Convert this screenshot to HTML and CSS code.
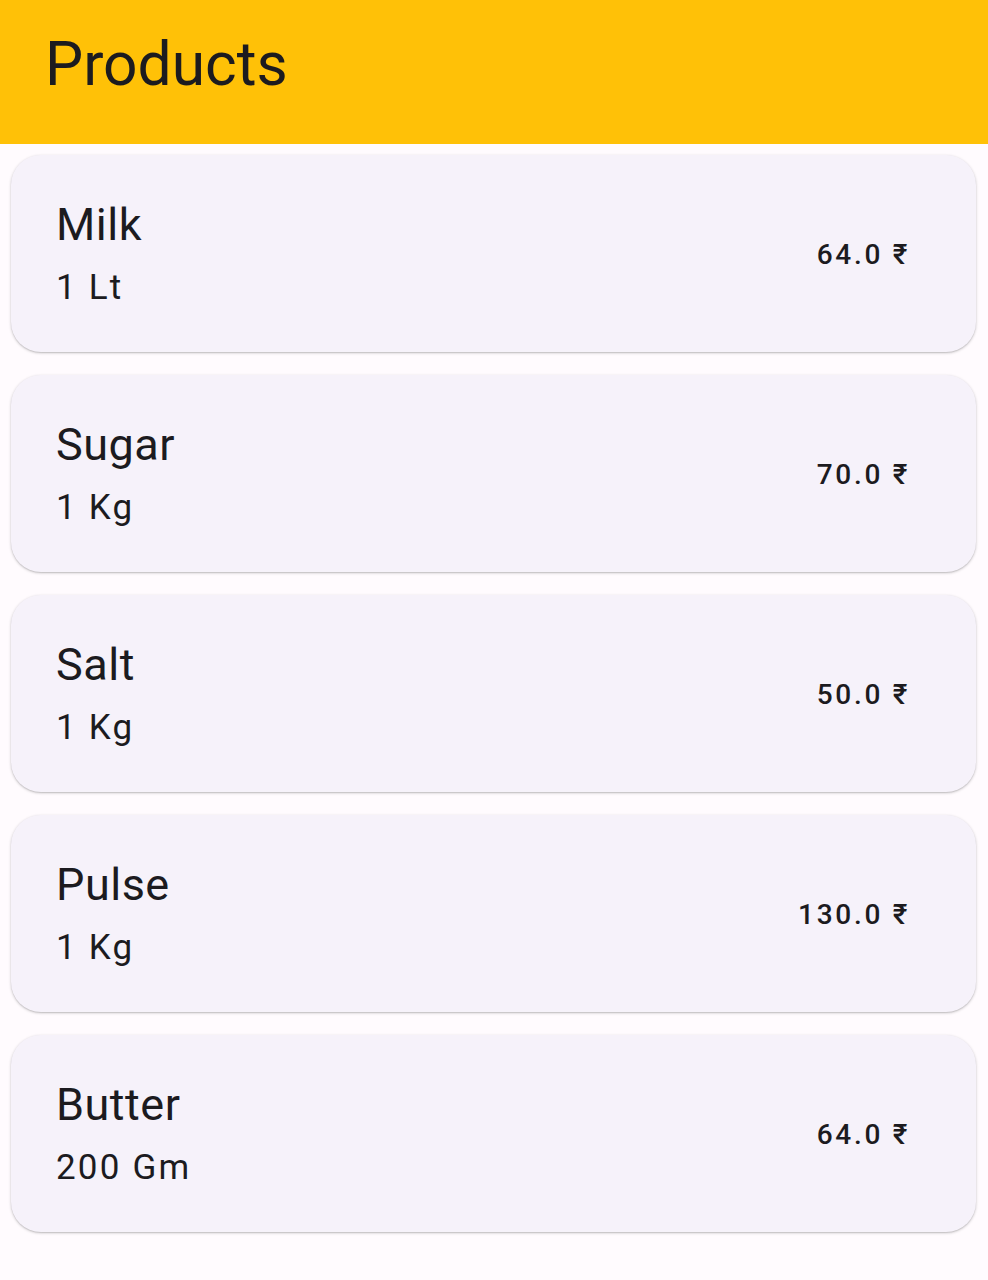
FILE: index.html
```html
<!DOCTYPE html>
<html lang="en">

<head>
    <meta charset="UTF-8">
    <meta name="viewport" content="width=device-width, initial-scale=1.0">
    <title>Products</title>
    <link rel="stylesheet" href="styles.css">
</head>

<body>
    <header class="app-bar">
        <h1>Products</h1>
    </header>

    <main class="product-list">
        <div class="product-card">
            <div class="product-info">
                <span class="product-name">Milk</span>
                <span class="product-qty">1 Lt</span>
            </div>
            <span class="product-price">64.0 ₹</span>
        </div>

        <div class="product-card">
            <div class="product-info">
                <span class="product-name">Sugar</span>
                <span class="product-qty">1 Kg</span>
            </div>
            <span class="product-price">70.0 ₹</span>
        </div>

        <div class="product-card">
            <div class="product-info">
                <span class="product-name">Salt</span>
                <span class="product-qty">1 Kg</span>
            </div>
            <span class="product-price">50.0 ₹</span>
        </div>

        <div class="product-card">
            <div class="product-info">
                <span class="product-name">Pulse</span>
                <span class="product-qty">1 Kg</span>
            </div>
            <span class="product-price">130.0 ₹</span>
        </div>

        <div class="product-card">
            <div class="product-info">
                <span class="product-name">Butter</span>
                <span class="product-qty">200 Gm</span>
            </div>
            <span class="product-price">64.0 ₹</span>
        </div>
    </main>
</body>

</html>
```

FILE: styles.css
```css
* {
    margin: 0;
    padding: 0;
    box-sizing: border-box;
}

body {
    font-family: Roboto, 'Noto Sans', 'DejaVu Sans', sans-serif;
    background: #fffbfe;
    color: #1c1b1f;
    min-height: 100vh;
}

.app-bar {
    height: 144px;
    background: #ffc107;
    padding: 34px 0 0 45px;
}

.app-bar h1 {
    font-size: 60.5px;
    font-weight: 400;
    line-height: 62px;
    color: #1c1b1f;
}

.product-list {
    display: flex;
    flex-direction: column;
    gap: 23px;
    padding: 11px 12px 0 11px;
}

.product-card {
    height: 197px;
    display: flex;
    align-items: center;
    justify-content: space-between;
    padding: 0 66px 0 45px;
    background: #f6f2fa;
    border-radius: 30px;
    box-shadow: 0 1px 3px rgba(0, 0, 0, 0.22), 0 1px 1px rgba(0, 0, 0, 0.08);
}

.product-info {
    display: flex;
    flex-direction: column;
    gap: 14px;
    margin-top: 2px;
}

.product-name {
    font-size: 45px;
    line-height: 52px;
    letter-spacing: 0.5px;
}

.product-qty {
    font-size: 35px;
    line-height: 46px;
    letter-spacing: 2.2px;
}

.product-price {
    font-size: 28px;
    line-height: 28px;
    font-weight: 500;
    letter-spacing: 2.7px;
    margin-top: 2px;
}
```
